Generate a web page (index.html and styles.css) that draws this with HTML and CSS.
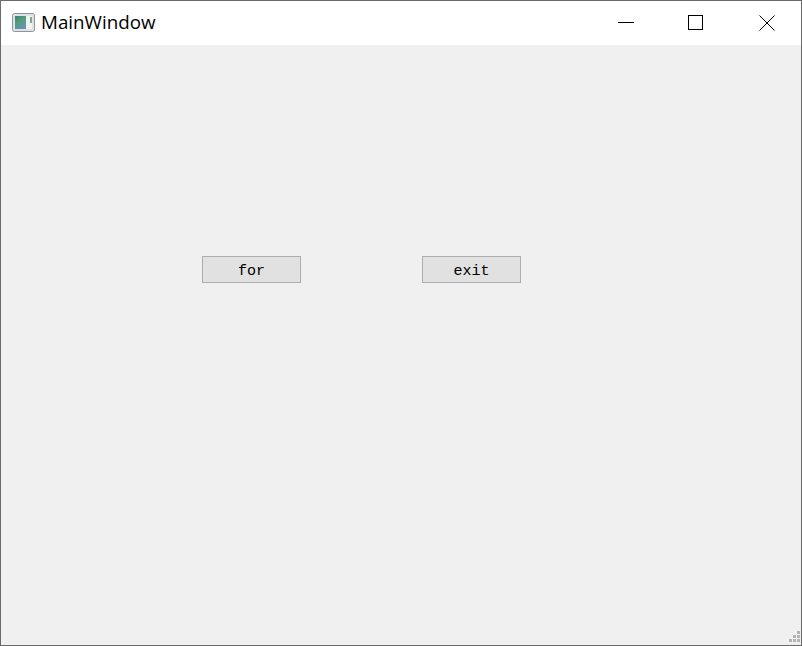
FILE: index.html
```html
<!DOCTYPE html>
<html lang="en">
<head>
<meta charset="utf-8">
<title>MainWindow</title>
<link rel="stylesheet" href="styles.css">
</head>
<body>
<div class="window">
  <header class="titlebar">
    <div class="title-group">
      <svg class="app-icon" width="24" height="20" viewBox="0 0 24 20">
        <defs>
          <linearGradient id="pane" x1="0" y1="0" x2="0.6" y2="1">
            <stop offset="0" stop-color="#3a7f74"/>
            <stop offset="0.5" stop-color="#55a07c"/>
            <stop offset="1" stop-color="#6a8fb8"/>
          </linearGradient>
        </defs>
        <rect x="0.5" y="0.5" width="22" height="18" rx="2" fill="#dfe3e6" stroke="#8e9499"/>
        <rect x="3" y="3" width="11" height="13" fill="url(#pane)"/>
        <rect x="14" y="3" width="6" height="13" fill="#f1f3f1"/>
        <rect x="18" y="4" width="2" height="6" fill="#7fa88c"/>
      </svg>
      <span class="title">MainWindow</span>
    </div>
    <div class="controls">
      <span class="control">
        <svg width="16" height="16" viewBox="0 0 16 16"><path d="M0 7.5H16" stroke="#000" fill="none"/></svg>
      </span>
      <span class="control">
        <svg width="16" height="16" viewBox="0 0 16 16"><rect x="0.5" y="0.5" width="14" height="14" stroke="#000" fill="none"/></svg>
      </span>
      <span class="control">
        <svg width="17" height="16" viewBox="0 0 17 16"><path d="M1.5 0.5L16.5 15.5M16.5 0.5L1.5 15.5" stroke="#000" fill="none"/></svg>
      </span>
    </div>
  </header>
  <main class="content">
    <div class="button-row">
      <button class="btn" type="button">for</button>
      <button class="btn" type="button">exit</button>
    </div>
    <svg class="grip" width="14" height="14" viewBox="0 0 14 14">
      <g fill="#b4b4b4">
        <rect x="10" y="0" width="3" height="3"/>
        <rect x="6" y="4" width="3" height="3"/>
        <rect x="10" y="4" width="3" height="3"/>
        <rect x="2" y="8" width="3" height="3"/>
        <rect x="6" y="8" width="3" height="3"/>
        <rect x="10" y="8" width="3" height="3"/>
      </g>
    </svg>
  </main>
</div>
</body>
</html>
```
FILE: styles.css
```css
* {
  box-sizing: border-box;
}

html,
body {
  margin: 0;
  padding: 0;
  height: 100%;
}

.window {
  width: 802px;
  height: 646px;
  display: flex;
  flex-direction: column;
  border: 1px solid #6b6b6b;
  background: #f0f0f0;
  overflow: hidden;
}

.titlebar {
  height: 44px;
  flex: none;
  display: flex;
  align-items: center;
  justify-content: space-between;
  background: #fff;
}

.title-group {
  display: flex;
  align-items: center;
  gap: 5px;
  padding-left: 11px;
}

.app-icon {
  display: block;
}

.title {
  font-family: "Open Sans", "Noto Sans", sans-serif;
  font-size: 18.8px;
  line-height: 26px;
  padding-bottom: 2px;
  color: #000;
}

.controls {
  display: flex;
}

.control {
  width: 70px;
  height: 44px;
  display: flex;
  align-items: center;
  justify-content: center;
}

.content {
  flex: 1;
  position: relative;
  padding: 211px 0 0 201px;
}

.button-row {
  display: flex;
  gap: 121px;
}

.btn {
  width: 99px;
  height: 27px;
  padding: 5px 0 0;
  border: 1px solid #adadad;
  border-radius: 0;
  background: #e1e1e1;
  color: #000;
  font-family: "Liberation Mono", "DejaVu Sans Mono", monospace;
  font-size: 15px;
  line-height: 20px;
}

.grip {
  position: absolute;
  right: 0;
  bottom: 0;
}
```
